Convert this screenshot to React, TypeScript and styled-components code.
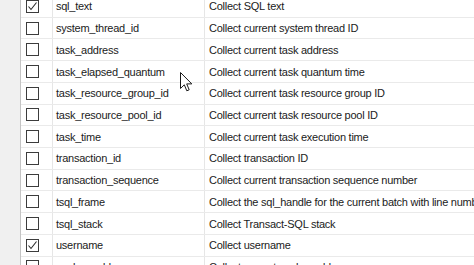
import React from "react";
import styled, { createGlobalStyle } from "styled-components";

const GlobalStyle = createGlobalStyle`
  html, body {
    margin: 0;
    padding: 0;
    background: #ffffff;
    overflow: hidden;
  }
  body {
    font-family: "Liberation Sans", Arial, sans-serif;
  }
`;

const Screen = styled.div`
  position: relative;
  display: flex;
  width: 474px;
  height: 265px;
  overflow: hidden;
  background: #ffffff;
`;

const Gutter = styled.div`
  flex: 0 0 20px;
  background: #f0f0f0;
  border-right: 1px solid #c4c4c4;
`;

const Grid = styled.div`
  flex: 1;
  display: flex;
  flex-direction: column;
  margin-top: -4px;
`;

const Row = styled.div`
  display: grid;
  grid-template-columns: 32px 152px 1fr;
  height: 21.72px;
  flex: 0 0 21.72px;
  box-sizing: border-box;
  border-bottom: 1px solid #eaeaea;
`;

const Cell = styled.div<{ $last?: boolean }>`
  display: flex;
  align-items: center;
  box-sizing: border-box;
  padding-left: 3px;
  border-right: ${(p) => (p.$last ? "none" : "1px solid #e6e6e6")};
  font-size: 11px;
  letter-spacing: -0.25px;
  color: #1b1b1b;
  white-space: nowrap;
  overflow: hidden;
`;

const CheckCell = styled(Cell)`
  padding-left: 5px;
`;

const DescCell = styled(Cell)`
  padding-left: 4px;
`;

const Box = styled.span`
  display: inline-flex;
  align-items: center;
  justify-content: center;
  width: 13px;
  height: 13px;
  box-sizing: border-box;
  border: 1px solid #3c3c3c;
  background: #ffffff;
`;

const Pointer = styled.svg`
  position: absolute;
  left: 180px;
  top: 72px;
`;

type Field = { name: string; desc: string; checked?: boolean };

const fields: Field[] = [
  { name: "sql_text", desc: "Collect SQL text", checked: true },
  { name: "system_thread_id", desc: "Collect current system thread ID" },
  { name: "task_address", desc: "Collect current task address" },
  { name: "task_elapsed_quantum", desc: "Collect current task quantum time" },
  { name: "task_resource_group_id", desc: "Collect current task resource group ID" },
  { name: "task_resource_pool_id", desc: "Collect current task resource pool ID" },
  { name: "task_time", desc: "Collect current task execution time" },
  { name: "transaction_id", desc: "Collect transaction ID" },
  { name: "transaction_sequence", desc: "Collect current transaction sequence number" },
  { name: "tsql_frame", desc: "Collect the sql_handle for the current batch with line numbers" },
  { name: "tsql_stack", desc: "Collect Transact-SQL stack" },
  { name: "username", desc: "Collect username", checked: true },
  { name: "worker_address", desc: "Collect current worker address" },
];

function CheckBox({ checked }: { checked?: boolean }) {
  return (
    <Box>
      {checked && (
        <svg width="11" height="11" viewBox="0 0 11 11">
          <path d="M1.5 5.5 L4 8.5 L9.5 1.5" fill="none" stroke="#2a2a2a" strokeWidth="1.1" />
        </svg>
      )}
    </Box>
  );
}

export default function App() {
  return (
    <>
      <GlobalStyle />
      <Screen>
        <Gutter />
        <Grid>
          {fields.map((f) => (
            <Row key={f.name}>
              <CheckCell>
                <CheckBox checked={f.checked} />
              </CheckCell>
              <Cell>{f.name}</Cell>
              <DescCell $last>{f.desc}</DescCell>
            </Row>
          ))}
        </Grid>
        <Pointer width="13" height="21" viewBox="0 0 13 21">
          <path
            d="M0.5 0.5 L0.5 16.5 L4.3 12.8 L6.8 18.8 L9.2 17.8 L6.7 11.9 L11.8 11.9 Z"
            fill="#ffffff"
            stroke="#1a1a1a"
            strokeWidth="1"
            strokeLinejoin="miter"
          />
        </Pointer>
      </Screen>
    </>
  );
}
